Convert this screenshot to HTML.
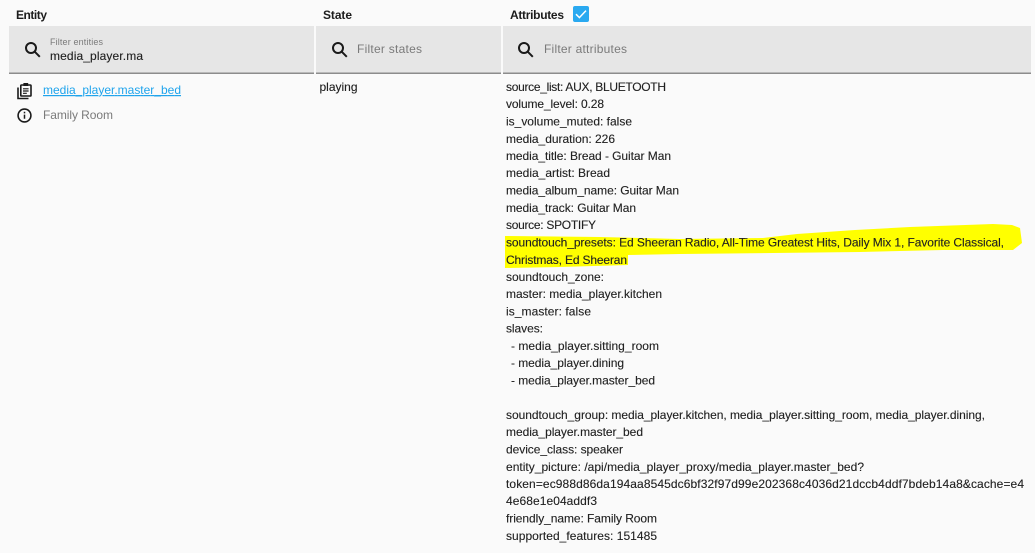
<!DOCTYPE html>
<html><head><meta charset="utf-8"><style>
html,body{margin:0;padding:0;background:#fafafa}
svg{display:block}
text{font-family:"Liberation Sans",Arial,sans-serif;font-size:12px;fill:#212121;stroke:#212121;stroke-width:.12px}
.b{font-weight:700;fill:#1c1c1c;stroke:none}
.g{fill:#7a7a7a;stroke:none}
</style></head><body>
<svg width="1035" height="553" viewBox="0 0 1035 553" xmlns="http://www.w3.org/2000/svg">
<rect width="1035" height="553" fill="#fafafa"/>
<text class="b" x="16" y="19" textLength="31" lengthAdjust="spacing">Entity</text>
<text class="b" x="323" y="19" textLength="29" lengthAdjust="spacing">State</text>
<text class="b" x="510" y="19" textLength="54" lengthAdjust="spacing">Attributes</text>
<rect x="573" y="6" width="16" height="16" rx="2" fill="#2aa9f0"/>
<path d="M576 14.2l3.4 3.4 6.6-7" fill="none" stroke="#fff" stroke-width="1.5"/>

<rect x="9" y="26" width="305" height="47" fill="#e6e6e6"/>
<rect x="316" y="26" width="185" height="47" fill="#e6e6e6"/>
<rect x="503" y="26" width="528" height="47" fill="#e6e6e6"/>
<rect x="9" y="72.5" width="305" height="1.5" fill="#8c8c8c"/>
<rect x="316" y="72.5" width="185" height="1.5" fill="#8c8c8c"/>
<rect x="503" y="72.5" width="528" height="1.5" fill="#8c8c8c"/>

<g fill="none" stroke="#1a1a1a" stroke-width="2">
<circle cx="31" cy="48" r="5"/><path d="M34.6 51.6l5.2 5.2"/>
<circle cx="338" cy="48" r="5"/><path d="M341.6 51.6l5.2 5.2"/>
<circle cx="524" cy="48" r="5"/><path d="M527.6 51.6l5.2 5.2"/>
</g>

<text class="g" x="50" y="45" style="font-size:9px" textLength="53" lengthAdjust="spacing">Filter entities</text>
<text x="50" y="60" fill="#333" textLength="93" lengthAdjust="spacing">media_player.ma</text>
<text class="g" x="357" y="53" textLength="65" lengthAdjust="spacing">Filter states</text>
<text class="g" x="544" y="53" textLength="83" lengthAdjust="spacing">Filter attributes</text>

<!-- entity icons -->
<g fill="none" stroke="#1a1a1a" stroke-width="1.6">
<path d="M18 87.5v11h10.5"/>
<rect x="20.8" y="85" width="10.2" height="11" rx=".8"/>
<path d="M23 88.8h5.6M23 91h5.6M23 93.3h3.8" stroke-width="1.2"/>
<rect x="23.4" y="83" width="4.8" height="3" fill="#1a1a1a" stroke="none"/>
<circle cx="24.5" cy="115.5" r="6.4"/>
<path d="M24.5 114.6v4.2M24.5 111.8v1.6" stroke-width="1.5"/>
</g>
<text x="43" y="94" style="fill:#1fa4ec;stroke:none;text-decoration:underline" textLength="138" lengthAdjust="spacing">media_player.master_bed</text>
<text class="g" x="43" y="119" textLength="70" lengthAdjust="spacing">Family Room</text>
<text x="319.5" y="91" textLength="38" lengthAdjust="spacing">playing</text>

<path d="M505 236L600 237L680 239L763 238L797 234L855 230L910 227L993 224L1012 225L1020 228L1022 243L1013 250L943 250L860 252L773 253L680 254L628 255L628 265L560 267L505 268Z" fill="#ffff00"/>

<text x="506" y="91" textLength="160" lengthAdjust="spacing">source_list: AUX, BLUETOOTH</text>
<text x="506" y="108" textLength="98" lengthAdjust="spacing">volume_level: 0.28</text>
<text x="506" y="125.5" textLength="126" lengthAdjust="spacing">is_volume_muted: false</text>
<text x="506" y="143" textLength="109" lengthAdjust="spacing">media_duration: 226</text>
<text x="506" y="160" textLength="165" lengthAdjust="spacing">media_title: Bread - Guitar Man</text>
<text x="506" y="177" textLength="104" lengthAdjust="spacing">media_artist: Bread</text>
<text x="506" y="194.5" textLength="173" lengthAdjust="spacing">media_album_name: Guitar Man</text>
<text x="506" y="212" textLength="130" lengthAdjust="spacing">media_track: Guitar Man</text>
<text x="506" y="229" textLength="90" lengthAdjust="spacing">source: SPOTIFY</text>
<text x="506" y="246.5" textLength="498" lengthAdjust="spacing">soundtouch_presets: Ed Sheeran Radio, All-Time Greatest Hits, Daily Mix 1, Favorite Classical,</text>
<text x="506" y="264" textLength="121" lengthAdjust="spacing">Christmas, Ed Sheeran</text>
<text x="506" y="281" textLength="98" lengthAdjust="spacing">soundtouch_zone:</text>
<text x="506" y="298" textLength="156" lengthAdjust="spacing">master: media_player.kitchen</text>
<text x="506" y="315.5" textLength="85" lengthAdjust="spacing">is_master: false</text>
<text x="506" y="332.5" textLength="37" lengthAdjust="spacing">slaves:</text>
<text x="511" y="350" textLength="148" lengthAdjust="spacing">- media_player.sitting_room</text>
<text x="511" y="367" textLength="113" lengthAdjust="spacing">- media_player.dining</text>
<text x="511" y="384.5" textLength="144" lengthAdjust="spacing">- media_player.master_bed</text>
<text x="506" y="419" textLength="479" lengthAdjust="spacing">soundtouch_group: media_player.kitchen, media_player.sitting_room, media_player.dining,</text>
<text x="506" y="436" textLength="137" lengthAdjust="spacing">media_player.master_bed</text>
<text x="506" y="453.5" textLength="117" lengthAdjust="spacing">device_class: speaker</text>
<text x="506" y="471" textLength="358" lengthAdjust="spacing">entity_picture: /api/media_player_proxy/media_player.master_bed?</text>
<text x="506" y="488" textLength="518" lengthAdjust="spacing">token=ec988d86da194aa8545dc6bf32f97d99e202368c4036d21dccb4ddf7bdeb14a8&amp;cache=e4</text>
<text x="506" y="505" textLength="91" lengthAdjust="spacing">4e68e1e04addf3</text>
<text x="506" y="522.5" textLength="151" lengthAdjust="spacing">friendly_name: Family Room</text>
<text x="506" y="540" textLength="151" lengthAdjust="spacing">supported_features: 151485</text>
</svg>
</body></html>
